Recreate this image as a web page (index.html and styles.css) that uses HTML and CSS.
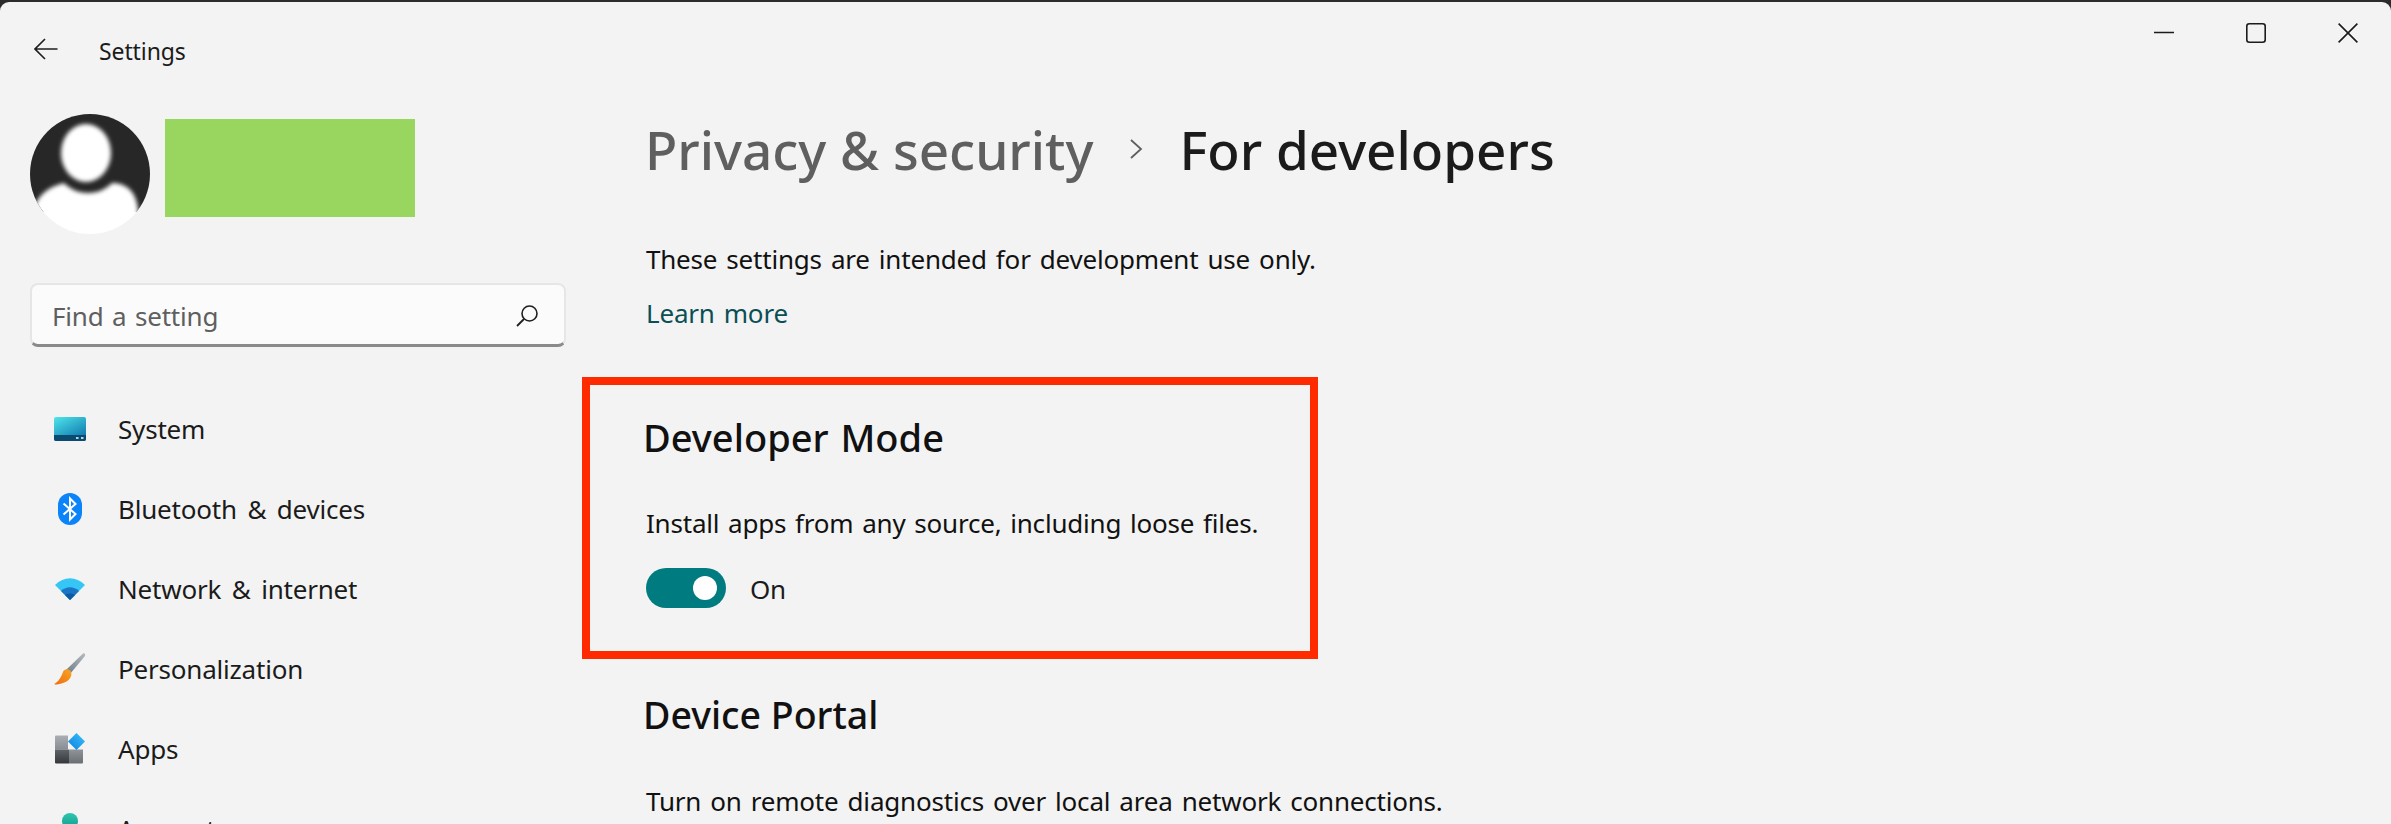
FILE: index.html
```html
<!DOCTYPE html>
<html lang="en">
<head>
<meta charset="utf-8">
<title>Settings</title>
<link rel="stylesheet" href="styles.css">
</head>
<body>
<div class="window">
  <header class="titlebar">
    <svg class="back" width="24" height="22" viewBox="0 0 24 22"><path d="M23.500 11H1.200M11 1 1 11l10 10" fill="none" stroke="#1f1f1f" stroke-width="1.600"/></svg>
    <span class="app-name">Settings</span>
    <div class="controls">
      <svg width="20" height="20" viewBox="0 0 20 20"><path d="M0 9.500h20" stroke="#1b1b1b" stroke-width="1.600"/></svg>
      <svg width="20" height="20" viewBox="0 0 20 20"><rect x=".8" y=".8" width="18.400" height="18.400" rx="2.500" fill="none" stroke="#1b1b1b" stroke-width="1.600"/></svg>
      <svg width="20" height="20" viewBox="0 0 20 20"><path d="m.6.6 18.800 18.800M19.400.6.6 19.400" stroke="#1b1b1b" stroke-width="1.600"/></svg>
    </div>
  </header>
  <div class="content">
    <aside class="sidebar">
      <div class="profile">
        <svg class="avatar" width="120" height="120" viewBox="0 0 120 120">
          <defs>
            <clipPath id="avatar-clip"><circle cx="60" cy="60" r="60"/></clipPath>
            <filter id="avatar-blur"><feGaussianBlur stdDeviation="2"/></filter>
          </defs>
          <g clip-path="url(#avatar-clip)">
            <rect width="120" height="98" fill="#272727"/>
            <g filter="url(#avatar-blur)" fill="#fff">
              <ellipse cx="56" cy="39" rx="25" ry="29"/>
              <path d="M4 130V94c4-13 14-21 30-25 6 6 14 10 24 10s18-4 24-10c14 0 24 8 26 26v35z"/>
            </g>
          </g>
        </svg>
        <div class="name-block"></div>
      </div>
      <div class="search">
        <span class="search-text">Find a setting</span>
        <svg width="22" height="22" viewBox="0 0 22 22"><circle cx="13.500" cy="8.500" r="7.500" fill="none" stroke="#1f1f1f" stroke-width="1.600"/><path d="M8 14 1 21" stroke="#1f1f1f" stroke-width="1.800"/></svg>
      </div>
      <nav class="nav">
        <a class="nav-item">
          <span class="nav-icon"><svg width="32" height="24" viewBox="0 0 32 24"><defs><linearGradient id="sys" x1="0" y1="0" x2=".7" y2="1"><stop offset="0" stop-color="#4fe6ec"/><stop offset="1" stop-color="#0f78ad"/></linearGradient></defs><rect width="32" height="24" rx="2" fill="url(#sys)"/><path d="M0 18h32v4a2 2 0 0 1-2 2H2a2 2 0 0 1-2-2z" fill="#0b4a70"/><path d="M22 20h2.500v2H22zM27 20h2.500v2H27z" fill="#b5d4e2"/></svg></span>
          <span>System</span>
        </a>
        <a class="nav-item">
          <span class="nav-icon"><svg width="24" height="32" viewBox="0 0 24 32"><rect width="24" height="32" rx="12" fill="#0a84f8"/><path d="m5.500 10.500 12 10.500-5.500 5.500V5.500L17.500 11l-12 10.500" fill="none" stroke="#fff" stroke-width="2"/></svg></span>
          <span>Bluetooth &amp; devices</span>
        </a>
        <a class="nav-item">
          <span class="nav-icon"><svg width="32" height="24" viewBox="0 0 32 24"><path d="M1 8c9-9 21-9 30 0L16 23z" fill="#35c6f6"/><path d="M7 14c5.500-5 12.500-5 18 0l-9 9z" fill="#1a75c4"/><path d="M11 18c3-2 7-2 10 0l-5 5z" fill="#0d5aa5"/></svg></span>
          <span>Network &amp; internet</span>
        </a>
        <a class="nav-item">
          <span class="nav-icon"><svg width="32" height="32" viewBox="0 0 32 32"><defs><linearGradient id="brush-handle" x1="1" y1="0" x2="0" y2="1"><stop offset="0" stop-color="#b5bcc2"/><stop offset="1" stop-color="#6f7a82"/></linearGradient><linearGradient id="brush-head" x1="1" y1="0" x2="0" y2="1"><stop offset="0" stop-color="#f5a623"/><stop offset="1" stop-color="#f26a10"/></linearGradient></defs><path d="M29 .5c1.500-.5 2.500.5 2 2.500L16 21l-4-4z" fill="url(#brush-handle)"/><path d="M9 19c1-3 5-3.500 7-1.500s2 6-1 9c-3 3.500-10 5-14 5-.5 0-.5-.5 0-1 3-1.500 6-6 8-11.500z" fill="url(#brush-head)"/></svg></span>
          <span>Personalization</span>
        </a>
        <a class="nav-item">
          <span class="nav-icon"><svg width="32" height="32" viewBox="0 0 32 32"><defs><linearGradient id="app-a" x1="0" y1="0" x2="0" y2="1"><stop offset="0" stop-color="#a9afb5"/><stop offset="1" stop-color="#878d93"/></linearGradient><linearGradient id="app-b" x1="0" y1="0" x2="0" y2="1"><stop offset="0" stop-color="#5f6367"/><stop offset="1" stop-color="#35383b"/></linearGradient><linearGradient id="app-c" x1="0" y1="0" x2="0" y2="1"><stop offset="0" stop-color="#8f9499"/><stop offset="1" stop-color="#6a6f74"/></linearGradient><linearGradient id="app-d" x1="1" y1="0" x2="0" y2="1"><stop offset="0" stop-color="#3cc2fb"/><stop offset="1" stop-color="#0a80e0"/></linearGradient></defs><path d="M1 3.500a1 1 0 0 1 1-1h12v14H1z" fill="url(#app-a)"/><path d="M1 16.500h14v14H2a1 1 0 0 1-1-1z" fill="url(#app-b)"/><path d="M15 16.500h14v13a1 1 0 0 1-1 1H15z" fill="url(#app-c)"/><path d="m22.500 0 8.500 8.500-8.500 8.500L14 8.500z" fill="url(#app-d)"/></svg></span>
          <span>Apps</span>
        </a>
        <a class="nav-item">
          <span class="nav-icon"><svg width="32" height="32" viewBox="0 0 32 32"><defs><linearGradient id="acct" x1="0" y1="0" x2="0" y2="1"><stop offset="0" stop-color="#2fc6b0"/><stop offset="1" stop-color="#0f9b90"/></linearGradient></defs><circle cx="16" cy="8" r="8" fill="url(#acct)"/></svg></span>
          <span>Accounts</span>
        </a>
      </nav>
    </aside>
    <main class="main">
      <h1 class="breadcrumb">
        <span class="crumb-parent">Privacy &amp; security</span>
        <svg class="crumb-sep" width="14" height="20" viewBox="0 0 14 20"><path d="m2 1 10 9-10 9" fill="none" stroke="#5f5f5f" stroke-width="1.800"/></svg>
        <span class="crumb-current">For developers</span>
      </h1>
      <p class="body-text intro">These settings are intended for development use only.</p>
      <a class="body-text learn">Learn more</a>
      <section class="highlight">
        <h2 class="section-title">Developer Mode</h2>
        <p class="body-text install">Install apps from any source, including loose files.</p>
        <div class="toggle-row">
          <span class="toggle"><span class="knob"></span></span>
          <span class="toggle-label">On</span>
        </div>
      </section>
      <h2 class="section-title portal">Device Portal</h2>
      <p class="body-text remote">Turn on remote diagnostics over local area network connections.</p>
    </main>
  </div>
</div>
</body>
</html>
```
FILE: styles.css
```css
* { box-sizing: border-box; }
html, body { margin: 0; height: 824px; overflow: hidden; background: #2b2b2b; }
body { padding-top: 2px; font-family: "Noto Sans", "Open Sans", sans-serif; color: #1b1b1b; }
.window { height: 822px; background: #f3f3f3; border-radius: 9px 9px 0 0; overflow: hidden; display: flex; flex-direction: column; }
.titlebar { height: 88px; flex: none; display: flex; align-items: flex-start; padding: 36px 33px 0 34px; }
.back { flex: none; }
.app-name { margin: -1px 0 0 41px; font-size: 23px; line-height: 28px; letter-spacing: -.1px; }
.controls { margin-left: auto; margin-top: -15px; display: flex; gap: 72px; }
.content { flex: 1; display: flex; min-height: 0; }
.sidebar { width: 582px; flex: none; padding: 24px 0 0 30px; }
.profile { display: flex; align-items: center; height: 120px; gap: 15px; }
.avatar { flex: none; }
.name-block { width: 250px; height: 98px; background: #98d660; margin-top: -12px; }
.search { margin-top: 49px; width: 536px; height: 64px; margin-left: 0; display: flex; align-items: center; justify-content: space-between; padding: 2px 26px 0 20px; background: #fbfbfb; border: 2px solid #e6e6e6; border-bottom: 3px solid #8a8a8a; border-radius: 8px; }
.search-text { font-size: 26px; color: #5f5f5f; letter-spacing: -.2px; word-spacing: 2px; }
.nav { margin-top: 42px; margin-left: -30px; }
.nav-item { height: 80px; display: flex; align-items: center; font-size: 26px; letter-spacing: -.2px; word-spacing: 4px; }
.nav-icon { width: 32px; margin-left: 54px; margin-right: 32px; flex: none; display: flex; justify-content: center; }
.nav-icon svg { display: block; }
.main { flex: 1; min-width: 0; padding-top: 24px; }
.breadcrumb { margin: 0 0 0 63px; display: flex; align-items: center; height: 70px; font-size: 53px; font-weight: 500; }
.crumb-parent { color: #5f5f5f; }
.crumb-sep { margin: 0 36px; }
.crumb-current { color: #1b1b1b; }
.body-text { display: block; margin: 0 0 0 64px; font-size: 26px; line-height: 36px; letter-spacing: -.2px; word-spacing: 2.500px; color: #111; }
.intro { margin-top: 57px; }
.learn { margin-top: 18px; color: #0b4f55; }
.highlight { margin-top: 46px; width: 736px; height: 282px; border: 8px solid #ff2a00; padding: 27px 0 0 53px; }
.section-title { margin: 0; font-size: 38px; line-height: 50px; font-weight: 500; color: #111; word-spacing: 2px; }
.install { margin: 43px 0 0 3px; word-spacing: 2.200px; }
.toggle-row { margin: 27px 0 0 3px; display: flex; align-items: center; gap: 24px; }
.toggle { width: 80px; height: 40px; border-radius: 20px; background: #007c80; display: flex; align-items: center; justify-content: flex-end; padding-right: 9px; }
.knob { width: 24px; height: 24px; border-radius: 50%; background: #fff; }
.toggle-label { font-size: 26px; letter-spacing: -.2px; padding-top: 2px; }
.portal { margin: 31px 0 0 61px; word-spacing: 0; font-size: 37.500px; }
.remote { margin-top: 43px; }
```
